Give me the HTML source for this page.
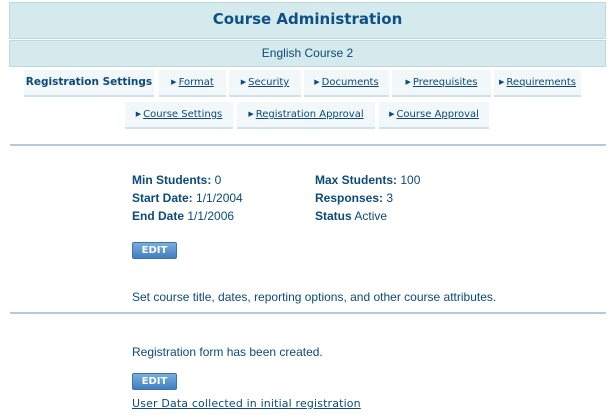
<!DOCTYPE html>
<html><head><style>
*{margin:0;padding:0;box-sizing:border-box}
body{width:612px;height:420px;background:#fff;font-family:"DejaVu Sans","Liberation Sans",sans-serif;color:#0b4a7a;position:relative;overflow:hidden}
.box{position:absolute;left:9px;width:597px;background:#d5eaed;border:1px solid #bcdbe1;text-align:center}
.t{top:2px;height:37px;font-size:15px;font-weight:bold;line-height:33px;color:#0d4f86}
.s{top:40px;height:27px;font-size:12px;line-height:25px;font-family:"Liberation Sans",sans-serif}
.tab{position:absolute;height:27px;background:#f2f7fa;border-bottom:2px solid #cfe1ea;font-size:10px;line-height:24px;text-align:center;white-space:nowrap}
.tab a{color:#0b4a7a;text-decoration:underline}
.tab b{font-size:10.5px}
.ar{font-size:7px;vertical-align:1px;margin-right:2px}
.hr{position:absolute;left:10px;width:596px;height:2px;background:#b7c9dc}
.txt{position:absolute;font-family:"Liberation Sans",sans-serif;font-size:12px;color:#0b4a7a}
.txt b{font-weight:bold}
.btn{position:absolute;width:45px;height:17px;background:linear-gradient(#7aaedb,#3f7fc0);border:1px solid #3a73ad;border-radius:2px;color:#fff;font-size:10px;font-weight:bold;text-align:center;line-height:15px;font-family:"DejaVu Sans",sans-serif}
</style></head><body>
<div class="box t">Course Administration</div>
<div class="box s">English Course 2</div>

<div class="tab" style="left:24px;top:70px;width:130px"><b>Registration Settings</b></div>
<div class="tab" style="left:159px;top:70px;width:67px"><span class="ar">▶</span><a>Format</a></div>
<div class="tab" style="left:229px;top:70px;width:72px"><span class="ar">▶</span><a>Security</a></div>
<div class="tab" style="left:304px;top:70px;width:85px"><span class="ar">▶</span><a>Documents</a></div>
<div class="tab" style="left:392px;top:70px;width:99px"><span class="ar">▶</span><a>Prerequisites</a></div>
<div class="tab" style="left:494px;top:70px;width:87px"><span class="ar">▶</span><a>Requirements</a></div>
<div class="tab" style="left:125px;top:102px;width:108px"><span class="ar">▶</span><a>Course Settings</a></div>
<div class="tab" style="left:237px;top:102px;width:138px"><span class="ar">▶</span><a>Registration Approval</a></div>
<div class="tab" style="left:379px;top:102px;width:110px"><span class="ar">▶</span><a>Course Approval</a></div>

<div class="hr" style="top:144px"></div>

<div class="txt" style="left:132px;top:173px"><b>Min Students:</b> 0</div>
<div class="txt" style="left:315px;top:173px"><b>Max Students:</b> 100</div>
<div class="txt" style="left:132px;top:191px"><b>Start Date:</b> 1/1/2004</div>
<div class="txt" style="left:315px;top:191px"><b>Responses:</b> 3</div>
<div class="txt" style="left:132px;top:209px"><b>End Date</b> 1/1/2006</div>
<div class="txt" style="left:315px;top:209px"><b>Status</b> Active</div>
<div class="btn" style="left:132px;top:242px">EDIT</div>

<div class="txt" style="left:132px;top:290px;white-space:nowrap">Set course title, dates, reporting options, and other course attributes.</div>
<div class="hr" style="top:312px"></div>

<div class="txt" style="left:132px;top:345px">Registration form has been created.</div>
<div class="btn" style="left:132px;top:373px">EDIT</div>
<div class="txt" style="left:132px;top:397px;text-decoration:underline;font-family:'DejaVu Sans',sans-serif;font-size:11px;letter-spacing:0.15px">User Data collected in initial registration</div>
</body></html>
